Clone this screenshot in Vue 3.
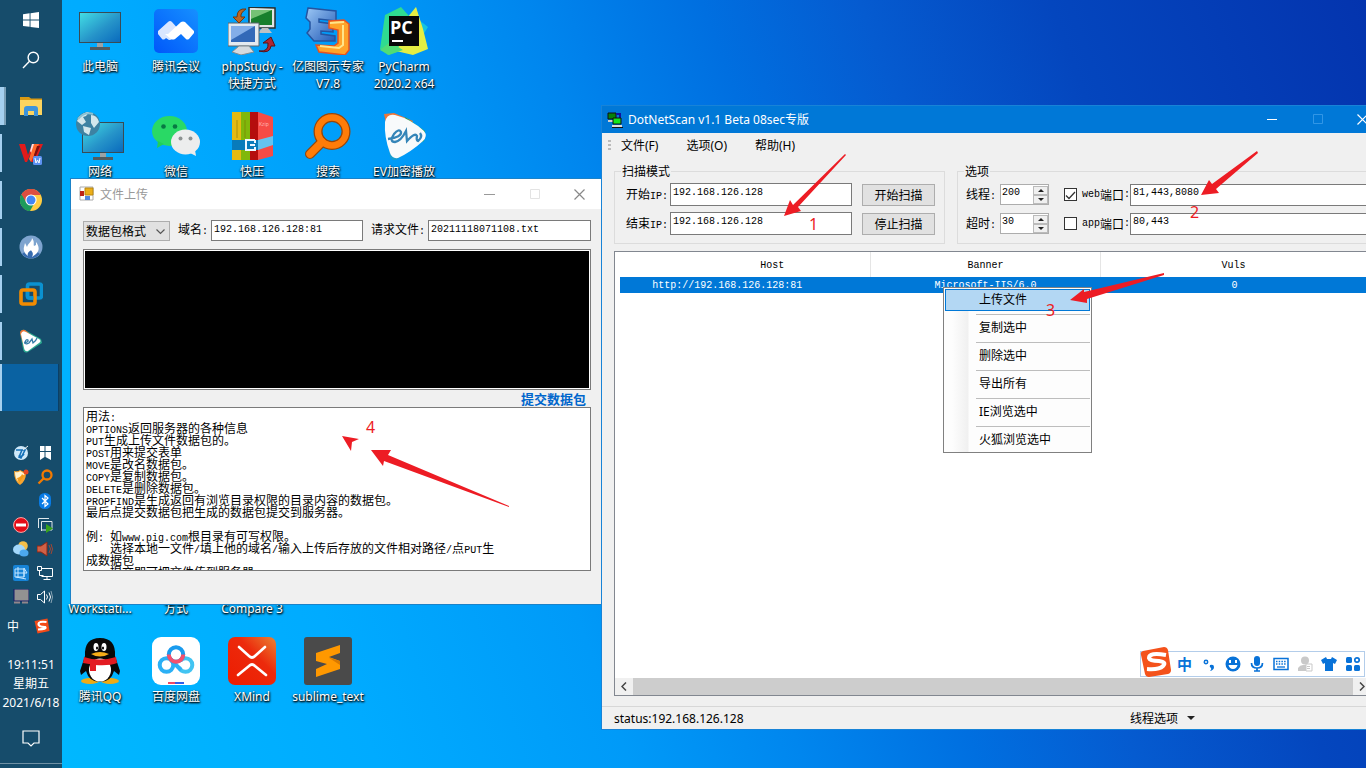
<script setup>
import { ref } from 'vue'

const shortcuts = [
  { icon: 'pc', col: 1, row: 1, lines: ['此电脑'] },
  { icon: 'meeting', col: 2, row: 1, lines: ['腾讯会议'] },
  { icon: 'php', col: 3, row: 1, lines: ['phpStudy -', '快捷方式'] },
  { icon: 'edraw', col: 4, row: 1, lines: ['亿图图示专家', 'V7.8'] },
  { icon: 'pycharm', col: 5, row: 1, lines: ['PyCharm', '2020.2 x64'] },
  { icon: 'network', col: 1, row: 2, lines: ['网络'] },
  { icon: 'wechat', col: 2, row: 2, lines: ['微信'] },
  { icon: 'zip', col: 3, row: 2, lines: ['快压'] },
  { icon: 'search', col: 4, row: 2, lines: ['搜索'] },
  { icon: 'ev', col: 5, row: 2, lines: ['EV加密播放'] },
  { icon: '', col: 1, row: 6, lines: ['Workstati...'] },
  { icon: '', col: 2, row: 6, lines: ['方式'] },
  { icon: '', col: 3, row: 6, lines: ['Compare 3'] },
  { icon: 'qq', col: 1, row: 7, lines: ['腾讯QQ'] },
  { icon: 'netdisk', col: 2, row: 7, lines: ['百度网盘'] },
  { icon: 'xmind', col: 3, row: 7, lines: ['XMind'] },
  { icon: 'sublime', col: 4, row: 7, lines: ['sublime_text'] }
]

const tasks = ['folder', 'wps', 'chrome', 'flame', 'vm', 'ev', 'active']
const tray = ['pen', 'flag', 'shield', 'find', '', 'bt', 'stop', 'copy', 'chat', 'horn', 'panel', 'net', 'kbd', 'vol']

const helpText = [
  '用法:',
  'OPTIONS返回服务器的各种信息',
  'PUT生成上传文件数据包的。',
  'POST用来提交表单',
  'MOVE是改名数据包。',
  'COPY是复制数据包。',
  'DELETE是删除数据包。',
  'PROPFIND是生成返回有浏览目录权限的目录内容的数据包。',
  '最后点提交数据包把生成的数据包提交到服务器。',
  '',
  '例: 如www.pig.com根目录有可写权限。',
  '    选择本地一文件/填上他的域名/输入上传后存放的文件相对路径/点PUT生',
  '成数据包',
  '    提交即可把文件传到服务器'
].map(line => (line.match(/[\x20-\x7e]+|[^\x20-\x7e]+/g) || []).map(t => ({ t, latin: /^[\x20-\x7e]/.test(t) })))

const menuItems = ['上传文件', '复制选中', '删除选中', '导出所有', 'IE浏览选中', '火狐浏览选中']

const domain = ref('192.168.126.128:81')
const requestFile = ref('20211118071108.txt')
const packet = ref('')
const startIp = ref('192.168.126.128')
const endIp = ref('192.168.126.128')
const threads = ref(200)
const timeout = ref(30)
const useWeb = ref(true)
const useApp = ref(false)
const webPorts = ref('81,443,8080')
const appPorts = ref('80,443')
</script>

<template>
  <div class="screen">
    <nav class="taskbar">
      <button class="sys" aria-label="开始">
        <svg width="16" height="16" viewBox="0 0 16 16" fill="#fff"><path d="M0 2.2 6.6 1.3V7.6H0zM7.5 1.2 16 0V7.6H7.5zM0 8.5H6.6V14.8L0 13.9zM7.5 8.5H16V16L7.5 14.9z" /></svg>
      </button>
      <button class="sys" aria-label="搜索">
        <svg width="18" height="18" viewBox="0 0 18 18" fill="none" stroke="#fff" stroke-width="1.4"><circle cx="11.3" cy="6.5" r="5.2" /><path d="M7.5 10.3 1 17" /></svg>
      </button>
      <div class="tasks">
        <button v-for="(t, i) in tasks" :key="t" class="task" :class="{ active: t === 'active', stacked: i === 0 }" :aria-label="t">
          <svg v-if="t !== 'active'" width="24" height="24" viewBox="0 0 24 24">
            <g v-if="t === 'folder'"><path d="M1 3h9l2 1.5h11V20H1z" fill="#d99a14" /><path d="M1 6h22v15H1z" fill="#fbd45f" /><path d="M5 20v-5q0-3 3-3h8q3 0 3 3v7h-4v-5H9v5H5z" fill="#3c94dc" /></g>
            <g v-else-if="t === 'wps'"><path d="M0 3h6l3 11 4-11h11l-8 18h-4l-1-7-3 7H6z" fill="#e11b1b" /><path d="M13 3h4l-4 10-2-3z" fill="#fff" opacity=".85" /><path d="m15 3 5 0-8 18-2-3z" fill="#ff6a2a" /><path d="M18 5h3l-5 12-1-3z" fill="#7d1010" /><rect x="14" y="15" width="9" height="9" rx="1.5" fill="#5d92f2" /><path d="m16 17 1 5 1.5-3 1.5 3 1-5" stroke="#fff" fill="none" /></g>
            <g v-else-if="t === 'chrome'"><circle cx="12" cy="12" r="11" fill="#ffcd42" /><path d="M12 12 2.5 6.5A11 11 0 0 1 21.5 6.5H12z" fill="#dc4e40" /><path d="M2.5 6.5A11 11 0 0 0 11 23l5-9-4-2z" fill="#1d9b5c" /><path d="M2.5 6.5 7.3 15 12 12V7h9.5A11 11 0 0 0 2.5 6.5z" fill="#dc4e40" /><path d="M2.5 6.5 7.3 15 11 17v6A11 11 0 0 1 2.5 6.5z" fill="#1d9b5c" /><circle cx="12" cy="12" r="5.6" fill="#fff" /><circle cx="12" cy="12" r="4.5" fill="#4286f4" /></g>
            <g v-else-if="t === 'flame'"><circle cx="12" cy="12" r="11.5" fill="#7ea4cf" /><path d="M3 19a11.5 11.5 0 0 0 18 0 14 14 0 0 0-18 0" fill="#376caf" /><path d="M9 21c-3-2-5-5-4-9l1-4 2 4c1-4 5-5 5-9 3 4 1 6 2 8l2-1V7c3 4 4 8 0 12l-4 3c2-4 0-5-1-7-3 2-4 4-3 6" fill="#fff" /></g>
            <g v-else-if="t === 'vm'" fill="none" stroke-width="3.6"><rect x="8.5" y="2" width="14" height="14" rx="2" stroke="#0b91d0" /><rect x="2" y="8" width="14" height="14" rx="2" stroke="#f38b00" /><path d="M8.5 10v4q0 2 2 2h4" stroke="#0b91d0" /></g>
            <g v-else><path d="M1 4Q2 0 6 1L22 10l1 4-14 9Q5 25 4 20z" fill="#2caa91" /><path d="M1 4Q2 0 6 1l6 5-7 12z" fill="#ef7131" /><path d="M2 5q1-4 5-2l13 7q3 2 0 4L9 22q-3 1-4-3z" fill="#fff" /><path d="M5 14q5-1 4-3-2-1-3 2 0 3 4 1l3-4 1 4q3-2 4-5" stroke="#347ca8" stroke-width="1.3" fill="none" /></g>
          </svg>
        </button>
      </div>
      <div class="tray">
        <span v-for="(t, i) in tray" :key="i" class="tray-cell">
          <svg v-if="t" width="16" height="16" viewBox="0 0 16 16">
            <g v-if="t === 'pen'"><circle cx="8" cy="8" r="7" fill="#cfe9fa" /><path d="M3 5h9L8 13l-2-1 3-7M6 10q2 3 5-1" stroke="#1470b8" stroke-width="1.6" fill="none" /><path d="m10 5 5-4" stroke="#eee" /></g>
            <g v-else-if="t === 'flag'" fill="#fff"><path d="M3 1h4.5v5H3zM8.5 1H14v5H8.5zM3 7h4.5v5L3 15zM8.5 7H14v8l-5.5-3z" /></g>
            <g v-else-if="t === 'shield'"><path d="M1 2q4 1 6-1l6 3q0 8-6 12Q1 12 1 2" fill="#f8a530" /><path d="M2 3q4 1 5-1l5 3q-4 2-6 8-4-3-4-10" fill="#fff3d1" /><path d="M4 9q4-1 5-4l2 2-5 7z" fill="#f39a18" /><circle cx="13" cy="3" r="2.5" fill="#e54824" /></g>
            <g v-else-if="t === 'find'" fill="none" stroke="#f47a00" stroke-width="2.3"><circle cx="10" cy="6" r="4.5" /><path d="m6.5 9.5-5 5" /></g>
            <g v-else-if="t === 'bt'"><rect x="2" y="0" width="12" height="16" rx="5.5" fill="#087be5" /><path d="m5 5 6 6-3 2.5v-11L11 5l-6 6" fill="none" stroke="#fff" stroke-width="1.2" /></g>
            <g v-else-if="t === 'stop'"><circle cx="8" cy="8" r="7.4" fill="#e40b17" stroke="#faa" /><path d="M3 6.5h10v3H3z" fill="#fff" /></g>
            <g v-else-if="t === 'copy'"><path d="M1.500 11V1.500H12M4.500 14V4.500H15V13H4.500" fill="none" stroke="#e0e8eb" /><path d="m9 7 7 4.500-7 4.500z" fill="#36a21b" /></g>
            <g v-else-if="t === 'chat'"><circle cx="10" cy="5" r="4.8" fill="#f4bf48" /><ellipse cx="6" cy="8.500" rx="6" ry="5" fill="#a3d8fb" /><ellipse cx="11" cy="12" rx="4.500" ry="3.500" fill="#4ca8ef" /></g>
            <g v-else-if="t === 'horn'"><path d="M0 5h4l6-4v14l-6-4H0z" fill="#d16146" stroke="#8c2716" /><path d="M12 4q3 4 0 8M14 3q3 5 0 10" fill="none" stroke="#a44734" /></g>
            <g v-else-if="t === 'panel'"><rect width="16" height="16" rx="2" fill="#1683d6" /><path d="M2 4h9v8H2zM5 2v11M2 8h12l-3-5v9M3 12l10 2" stroke="#c4e6ff" fill="none" /></g>
            <g v-else-if="t === 'net'" fill="none" stroke="#fff"><path d="M4.500 3.500h11v8h-11M10 11.500v3M6.500 14.500h7M.5 1.500h4v4h-4zM2.500 5.500v5h4" /></g>
            <g v-else-if="t === 'kbd'"><path d="M1 0h15v12H1z" fill="#929292" stroke="#181866" /><path d="M1 13.500h6M9 13.500h6" stroke="#92868c" stroke-width="2" /></g>
            <g v-else fill="none" stroke="#fff"><path d="M.5 5.500h3l4-3.500v12l-4-3.500h-3z" /><path d="M9.500 5.500q2 2.500 0 5M12 3.500q3 4.500 0 9" /><path d="M14 2q3 6 0 12" opacity=".5" /></g>
          </svg>
        </span>
      </div>
      <div class="ime">
        <span>中</span>
        <svg width="16" height="16" viewBox="0 0 32 32"><path d="m1 6 26-5 4 25-24 5z" fill="#f34a18" /><path d="M25 8Q9 6 9 12t13 6q5 4-14 5" fill="none" stroke="#fff" stroke-width="4.500" /></svg>
      </div>
      <div class="clock"><time>19:11:51</time><span>星期五</span><span>2021/6/18</span></div>
      <button class="notice" aria-label="通知">
        <svg width="18" height="17" viewBox="0 0 18 17" fill="none" stroke="#fff" stroke-width="1.2"><path d="M1 1h16v12h-5l-3 3-3-3H1z" /></svg>
      </button>
    </nav>

    <main class="desktop">
      <div class="icons">
        <div v-for="s in shortcuts" :key="s.lines[0]" class="shortcut" :class="{ tail: !s.icon }" :style="{ gridColumn: s.col, gridRow: s.row }">
          <svg v-if="s.icon" width="48" height="48" viewBox="0 0 48 48">
            <defs>
              <linearGradient id="scr" x1="0" y1="0" x2="1" y2="1"><stop stop-color="#43dfe5" /><stop offset=".55" stop-color="#2694c9" /><stop offset="1" stop-color="#0869bd" /></linearGradient>
              <linearGradient id="meet" x1="1" y1="0" x2="0" y2="1"><stop stop-color="#1690ff" /><stop offset="1" stop-color="#0057fa" /></linearGradient>
              <linearGradient id="blueE" x1="0" y1="0" x2="1" y2="1"><stop stop-color="#9dc8f5" /><stop offset="1" stop-color="#2059b6" /></linearGradient>
              <linearGradient id="red" x1="1" y1="0" x2="0" y2="1"><stop stop-color="#e98332" /><stop offset=".4" stop-color="#ec2a0c" /><stop offset="1" stop-color="#ed1c00" /></linearGradient>
            </defs>
            <g v-if="s.icon === 'pc'"><rect x="3.500" y="5.500" width="41" height="30" fill="url(#scr)" stroke="#394b55" /><path d="M21 36h6v5h-6z" fill="#9ba3a7" /><path d="M14 40h20v3H14z" fill="#515b60" /></g>
            <g v-else-if="s.icon === 'meeting'"><rect x="2" y="2" width="44" height="44" rx="5" fill="url(#meet)" /><path d="m6 27 0-3 10-9q2-2 4 0l8 9-8 8q-1 1-3 1l-3-2-1 1q-2 1-3 0z" fill="#d9e6ff" /><path d="m16 27 13-12q2-1 4 0l9 9v2l-5 6q-2 1-3 0l-5-5-6 5q-2 1-4 0l-6-5z" fill="#fff" /></g>
            <g v-else-if="s.icon === 'php'"><path d="m21 0 26 1v20H21z" fill="#e0e5e4" stroke="#252f31" stroke-width="1.500" /><path d="m23 3 21 0v15H23z" fill="#177f2c" /><path d="m23 3 21 0-21 9z" fill="#75c275" /><path d="M34 21h6l4 5H30z" fill="#bdc2c4" /><path d="M0 16h31v23H0z" fill="#e3eaf0" stroke="#59646c" /><path d="M3 19h24v16H3z" fill="#3269b8" /><path d="M3 19h24L3 33z" fill="#83aee8" /><path d="M11 39h10l5 6-13 3-9-3z" fill="#d5dade" stroke="#818b91" /><path d="M18 2q-9-1-9 8H5l6 6 6-6h-4q-1-4 5-8" fill="#bd6724" stroke="#73370d" /><path d="M31 44q10 1 9-8h-5l8-6 4 9h-4q-1 8-12 5" fill="#ae2735" stroke="#551117" /></g>
            <g v-else-if="s.icon === 'edraw'"><path d="m4 1 28 3v10l-17-2v3l14 2v8l-12-1v3l14 2v5H10l-7-8 3-4V15l-4-4z" fill="url(#blueE)" stroke="#2554a0" stroke-width="1.500" /><path d="m25 14 15-1 5 4v26l-4 5-26-3-3-7 18 1 4-3V23l-9-2z" fill="#ffa329" stroke="#e65220" stroke-width="1.500" /><path d="m26 16 14-1M16 39l19 2 4-3V18" stroke="#ffe58a" stroke-width="2" fill="none" /></g>
            <g v-else-if="s.icon === 'pycharm'"><path d="M5 8 21 0l8 9-4 33-17 6L0 42z" fill="#2fdb91" /><path d="m29 8 7-8 3 13 9 7-8 13z" fill="#14c4df" /><path d="M28 10 36 0l7 22 5 20-15 6-17-4 12-20z" fill="#e5ee43" /><path d="m0 43 10-8 13 8-14 5z" fill="#50dc76" /><rect x="9" y="9" width="30" height="30" fill="#080808" /><text x="10" y="27" class="pc-text">PC</text><path d="M12 33h11v2H12z" fill="#fff" /></g>
            <g v-else-if="s.icon === 'network'"><rect x="6.500" y="10.500" width="41" height="30" fill="url(#scr)" stroke="#394b55" /><path d="M24 41h6v4h-6z" fill="#9ba3a7" /><path d="M17 45h20v3H17z" fill="#515b60" /><circle cx="12" cy="12" r="12" fill="#3d82a2" /><path d="M3 5q5-5 10-5l-3 4-3 1 3 5-4 3-5-4zM15 3q6 0 8 7l-5 6-3-5zM7 14l8 2-2 7-5-3z" fill="#d3e7ec" /><path d="M2 7q7-8 15-5" fill="none" stroke="#8ac3d5" stroke-width="2" /></g>
            <g v-else-if="s.icon === 'wechat'"><ellipse cx="17.500" cy="19" rx="17.500" ry="15" fill="#29d965" /><path d="m6 29-1 7 7-4z" fill="#20cf5c" /><circle cx="11.500" cy="14.500" r="2.300" fill="#087943" /><circle cx="23" cy="14.500" r="2.300" fill="#087943" /><ellipse cx="33.500" cy="30" rx="14.500" ry="12.500" fill="#eceded" /><path d="m38 41 6 3-1-6z" fill="#ececec" /><circle cx="28.500" cy="26.500" r="2" fill="#8d9292" /><circle cx="38.500" cy="26.500" r="2" fill="#8d9292" /></g>
            <g v-else-if="s.icon === 'zip'"><path d="M4 0h9v48H4z" fill="#e5ba12" /><path d="M13 0h9v48h-9z" fill="#80b80b" /><path d="M22 0h8v48h-8z" fill="#b50d0d" /><path d="m30 0 15 5v39l-15 4z" fill="#f64b46" /><path d="M9 8v18M17 8v18" stroke="#776b05" opacity=".5" /><path d="M4 28h26v10H4z" fill="#087bbb" /><path d="m30 28 15-4v9l-15 5z" fill="#65c3f0" /><path d="M27 28h-9v10h9v-3M27 28v3M22 33h5" fill="none" stroke="#eef7ff" stroke-width="2" /><text x="31" y="14" class="zip-text">Kzip</text></g>
            <g v-else-if="s.icon === 'search'" fill="none" stroke-linecap="round"><circle cx="28" cy="19.500" r="14" stroke="#96460a" stroke-width="9" /><path d="M18 30 6 42" stroke="#96460a" stroke-width="10" /><circle cx="28" cy="19.500" r="14" stroke="#ff7c08" stroke-width="6.500" /><path d="M18 30 6 42" stroke="#ff7c08" stroke-width="7.500" /></g>
            <g v-else-if="s.icon === 'ev'"><path d="M4 2 14 1l19 8-20 32z" fill="#ef7638" /><path d="m25 5 20 14-1 10-13 6z" fill="#15a05d" /><path d="m9 38 23-1-14 10q-6 3-8-2z" fill="#179dd0" /><path d="M5 10Q7 1 15 3q16 4 29 16 4 5-1 10-12 11-25 17-6 1-8-5Q4 25 5 10" fill="#f8fafb" /><path d="M8 27q14-2 13-7-2-4-7 2-5 8 1 8 6-1 11-11l1 10q8-9 10-5-1 4 1 5 5-4 2-8" fill="none" stroke="#3585b8" stroke-width="2.300" /></g>
            <g v-else-if="s.icon === 'qq'"><ellipse cx="14" cy="44" rx="9" ry="3" fill="#efab16" /><ellipse cx="34" cy="44" rx="9" ry="3" fill="#efab16" /><path d="M9 19Q8 1 24 1t15 18l5 15-1 4-5-4q-3 11-14 11T10 34l-5 4-1-4z" fill="#090909" /><ellipse cx="24" cy="33" rx="11" ry="11.500" fill="#fff" /><path d="M8 20q15 5 32 0l1 6q-7 3-22 2l-12-2z" fill="#e31b22" /><path d="M14 26h6v8h-6z" fill="#e31b22" /><ellipse cx="20" cy="10" rx="2.500" ry="4" fill="#fff" /><ellipse cx="28" cy="10" rx="2.500" ry="4" fill="#fff" /><ellipse cx="21" cy="11" rx="1" ry="1.500" /><ellipse cx="27" cy="11" rx="1" ry="1.500" /><path d="M15 17q9-4 18 0-9 5-18 0" fill="#f6ad17" /></g>
            <g v-else-if="s.icon === 'netdisk'"><rect width="48" height="48" rx="9" fill="#fff" /><g fill="none" stroke-width="4"><circle cx="14.500" cy="28" r="6.800" stroke="#2bb0f5" /><circle cx="33.500" cy="28" r="6.800" stroke="#42c4f2" stroke-dasharray="36 7" stroke-dashoffset="-26" /><path d="m19 23 10 10" stroke="#2bb0f5" /><circle cx="24" cy="17.500" r="7.200" stroke="#199bee" /><path d="M16.800 17.500a7.200 7.200 0 0 0 14.400 0" stroke="#f4506d" /></g><path d="M16 45h7v2h-7z" fill="#ed4966" /><path d="M23 45h9v2h-9z" fill="#315fe9" /></g>
            <g v-else-if="s.icon === 'xmind'"><rect width="48" height="48" rx="7" fill="url(#red)" /><path d="m11 10 10 9q3 3 6 0l10-9M10 38l11-9q3-3 6 0l11 9" fill="none" stroke="#fff" stroke-width="2.600" stroke-linecap="round" /></g>
            <g v-else><rect width="48" height="48" rx="3" fill="#4a4a4a" /><path d="m12 16 24-8v8l-11 4 11 4v8l-24 8v-8l11-5-11-3z" fill="#ff9800" /><path d="m24.500 20.500 11.500 3.500v4z" fill="#d97900" /></g>
          </svg>
          <span v-for="l in s.lines" :key="l">{{ l }}</span>
        </div>
      </div>

      <section class="window upload">
        <header class="titlebar">
          <svg width="16" height="16" viewBox="0 0 16 16"><path d="M1 1h13v13H1z" fill="#fff" stroke="#aaa" /><path d="M6 2h8v7H6z" fill="#ecae18" stroke="#b68612" /><path d="M1 5h4v5H1z" fill="#bd2418" /><path d="M6 10h5v4H6z" fill="#5189df" /></svg>
          <h2>文件上传</h2>
          <button aria-label="最小化"><svg width="11" height="11"><path d="M0 5.500h11" stroke="#999" /></svg></button>
          <button aria-label="最大化" disabled><svg width="11" height="11"><path d="M.5.5h9v9h-9z" fill="none" stroke="#e3e3e3" /></svg></button>
          <button aria-label="关闭"><svg width="11" height="11"><path d="m.5.5 10 10m0-10-10 10" stroke="#888" stroke-width="1.200" /></svg></button>
        </header>
        <div class="upload-body">
          <div class="upload-row">
            <div class="combo">
              <select aria-label="数据包格式"><option>数据包格式</option></select>
              <svg width="9" height="6" viewBox="0 0 9 6"><path d="m.5.5 4 4 4-4" fill="none" stroke="#555" stroke-width="1.200" /></svg>
            </div>
            <label for="domain">域名<b class="lat">:</b></label>
            <input id="domain" v-model="domain" class="box domain">
            <label for="reqfile">请求文件<b class="lat">:</b></label>
            <input id="reqfile" v-model="requestFile" class="box grow">
          </div>
          <textarea v-model="packet" class="packet" aria-label="数据包"></textarea>
          <a href="#" class="submit">提交数据包</a>
          <div class="help" tabindex="0" aria-label="用法">
            <p v-for="(line, i) in helpText" :key="i"><span v-for="(p, j) in line" :key="j" :class="{ lat: p.latin }">{{ p.t }}</span></p>
          </div>
        </div>
      </section>

      <section class="window scan">
        <header class="titlebar">
          <svg width="16" height="16" viewBox="0 0 16 16"><path d="M1 1h8v6H1z" fill="#06820b" stroke="#111" /><path d="M1 9h6" stroke="#ccc" stroke-width="2" /><path d="M9 2h4v4" fill="none" stroke="#1111a0" stroke-width="2" /><path d="M6 6h8v6H6z" fill="#12e51b" stroke="#111" /><path d="M5 14h10" stroke="#ddd" stroke-width="2" /><path d="M5 15.500h11" stroke="#111" /></svg>
          <h2>DotNetScan v1.1 Beta 08sec专版</h2>
          <button aria-label="最小化"><svg width="11" height="11"><path d="M0 5.500h10" stroke="#fff" /></svg></button>
          <button aria-label="最大化" disabled><svg width="11" height="11"><path d="M.5.5h9v9h-9z" fill="none" stroke="#3196e6" /></svg></button>
          <button aria-label="关闭"><svg width="11" height="11"><path d="m.5.5 10 10m0-10-10 10" stroke="#fff" stroke-width="1.200" /></svg></button>
        </header>
        <nav class="menubar">
          <i class="grip"></i>
          <button>文件(F)</button><button>选项(O)</button><button>帮助(H)</button>
        </nav>
        <div class="groups">
          <fieldset class="mode">
            <legend>扫描模式</legend>
            <div class="line">
              <label for="ip1">开始<b class="lat">IP:</b></label>
              <input id="ip1" v-model="startIp" class="box ip">
              <button class="push">开始扫描</button>
            </div>
            <div class="line">
              <label for="ip2">结束<b class="lat">IP:</b></label>
              <input id="ip2" v-model="endIp" class="box ip">
              <button class="push">停止扫描</button>
            </div>
          </fieldset>
          <fieldset class="opts">
            <legend>选项</legend>
            <div class="line">
              <label for="threads">线程<b class="lat">:</b></label>
              <span class="spin">
                <input id="threads" v-model="threads" type="number">
                <span class="arrows"><button aria-label="增加" @click="threads++"><i class="up"></i></button><button aria-label="减少" @click="threads--"><i class="down"></i></button></span>
              </span>
              <label class="check"><input v-model="useWeb" type="checkbox"><svg v-if="useWeb" width="11" height="11" viewBox="0 0 11 11"><path d="m1 5.500 3 3 6-6.500" fill="none" stroke="#333" stroke-width="1.300" /></svg><b class="lat">web</b>端口<b class="lat">:</b></label>
              <input v-model="webPorts" class="box grow" aria-label="web端口">
            </div>
            <div class="line">
              <label for="timeout">超时<b class="lat">:</b></label>
              <span class="spin">
                <input id="timeout" v-model="timeout" type="number">
                <span class="arrows"><button aria-label="增加" @click="timeout++"><i class="up"></i></button><button aria-label="减少" @click="timeout--"><i class="down"></i></button></span>
              </span>
              <label class="check"><input v-model="useApp" type="checkbox"><b class="lat">app</b>端口<b class="lat">:</b></label>
              <input v-model="appPorts" class="box grow" aria-label="app端口">
            </div>
          </fieldset>
        </div>
        <div class="list">
          <table>
            <thead><tr><th class="host">Host</th><th class="banner">Banner</th><th>Vuls</th></tr></thead>
            <tbody><tr><td class="url">http://192.168.126.128:81</td><td>Microsoft-IIS/6.0</td><td>0</td></tr></tbody>
          </table>
          <div class="hscroll">
            <button aria-label="向左"><svg width="6" height="9"><path d="m5 .5-4 4 4 4" fill="none" stroke="#444" stroke-width="1.500" /></svg></button>
            <i class="thumb"></i>
            <button aria-label="向右"><svg width="6" height="9"><path d="m1 .5 4 4-4 4" fill="none" stroke="#444" stroke-width="1.500" /></svg></button>
          </div>
        </div>
        <footer class="status"><span>status:192.168.126.128</span><button>线程选项 <i class="down"></i></button></footer>
      </section>

      <ul class="context">
        <li v-for="(m, i) in menuItems" :key="m"><button :class="{ hot: i === 0 }">{{ m }}</button></li>
      </ul>

      <div class="sogou">
        <svg class="logo" width="32" height="32" viewBox="0 0 32 32"><path d="M3 5 24 1q3 0 4 3l3 20q0 3-3 4L9 31q-3 0-4-3L1 9q-1-3 2-4" fill="#f4521b" /><path d="M26 9Q9 6 9 12q1 3 10 3 8 1 4 5-4 4-16 3" fill="none" stroke="#fff" stroke-width="4" /></svg>
        <span class="zh">中</span>
        <svg width="16" height="16" viewBox="0 0 16 16"><circle cx="5" cy="6" r="1.700" fill="none" stroke="#0872d8" stroke-width="1.500" /><path d="M9 9q4-1 4 2 0 3-4 4 2-2 1-3-2-1-1-3" fill="#0872d8" /></svg>
        <svg width="16" height="16" viewBox="0 0 16 16"><circle cx="8" cy="8" r="7.500" fill="#0872d8" /><path d="M4 4h2v3H4zM10 4h2v3h-2zM3.500 9h9q-1 4-4.500 4T3.500 9" fill="#fff" /></svg>
        <svg width="16" height="16" viewBox="0 0 16 16"><rect x="5" y="0" width="6" height="10" rx="3" fill="#0872d8" /><path d="M2.500 7q0 5 5.500 5t5.500-5M8 12v3M5 15h6" fill="none" stroke="#0872d8" stroke-width="1.700" /></svg>
        <svg width="16" height="16" viewBox="0 0 16 16"><path d="M1 2.500h14v11H1z" fill="none" stroke="#0872d8" stroke-width="1.500" /><path d="M3 5.500h10M3 8h10" stroke="#0872d8" stroke-width="1.500" stroke-dasharray="1.500 1.200" /><path d="M4 11h8" stroke="#0872d8" stroke-width="1.300" /></svg>
        <svg width="16" height="16" viewBox="0 0 16 16"><circle cx="8" cy="4.500" r="4" fill="#c9c9c9" /><path d="M1 15v-3q2-3 5-3h4v6z" fill="#c9c9c9" /><path d="M9 8h6v7H9z" fill="#fff" stroke="#c9c9c9" /><path d="M10 10.500h3M10 12.500h3" stroke="#c9c9c9" /></svg>
        <svg width="16" height="16" viewBox="0 0 16 16"><path d="m5 1 1 2h4l1-2 5 3-2 4-2-1v8H4V7L2 8 0 4z" fill="#0872d8" /></svg>
        <svg width="16" height="16" viewBox="0 0 16 16" fill="#0872d8"><rect x="1" y="1" width="6" height="6" rx="1.500" /><rect x="1" y="9" width="6" height="6" rx="1.500" /><rect x="9" y="9" width="6" height="6" rx="1.500" /><circle cx="12" cy="4" r="2.200" fill="none" stroke="#0872d8" stroke-width="1.700" /></svg>
      </div>
    </main>

    <svg class="marks" width="1366" height="768" viewBox="0 0 1366 768" fill="#ed1c24" aria-hidden="true">
      <path d="m784 216 6-16 3 5 52-51 1 1-48 52 3 4z" />
      <path d="m1201 195 8-15 3 4 45-33 1 2-42 36 3 4z" />
      <path d="m1070 300 14-11v3l80-19v2l-77 24v4z" />
      <path d="m371 450 20 0-3 5 121 51v1l-125-46-1 5z" />
      <path d="m342 436 17 3-7 3-1 9z" />
      <text x="809" y="230">1</text>
      <text x="1190" y="218">2</text>
      <text x="1046" y="316">3</text>
      <text x="366" y="433">4</text>
    </svg>
  </div>
</template>

<style>
html, body { overflow: hidden; }
</style>

<style scoped>
.screen, .screen * { box-sizing: border-box; }
.screen { position: relative; display: flex; min-height: 100vh; font: 12px/17px "Noto Sans", "Noto Sans CJK SC", sans-serif; color: #000; overflow: hidden; }
button { padding: 0; border: 0; background: none; font: inherit; color: inherit; }
input, select, textarea { font: inherit; margin: 0; border-radius: 0; outline: 0; }
.lat { font: 10px/12px "Liberation Mono", monospace; }
svg { flex: none; display: block; }

.taskbar { width: 62px; flex: none; display: flex; flex-direction: column; background: #164c6b; color: #fff; }
.sys { height: 40px; display: grid; place-items: center; }
.tasks { margin-top: 2px; }
.task { position: relative; display: grid; place-items: center; width: 62px; height: 47px; }
.task::before { content: ""; position: absolute; left: 0; top: 5px; width: 2px; height: 38px; background: #a5d0f0; }
.task.stacked::before { width: 4px; border-right: 2px solid #7ba0b8; }
.task.active { width: 59px; background: #0a62a2; border-right: 1px solid #0b3f65; }
.task.active::before { top: 0; height: 47px; }
.tray { margin: 30px 0 0 9px; display: grid; grid-template-columns: 24px 24px; grid-auto-rows: 24px; }
.tray-cell { display: grid; place-items: center; }
.ime { display: flex; align-items: center; justify-content: space-between; height: 34px; padding: 0 12px 0 7px; }
.clock { margin-top: 12px; display: flex; flex-direction: column; align-items: center; line-height: 19px; white-space: nowrap; }
.notice { margin-top: 9px; height: 34px; display: grid; place-items: center; border: 0; }
.taskbar::after { content: ""; margin-top: 8px; border-top: 1px solid #6f91a5; }

.desktop { position: relative; flex: 1; overflow: hidden; background: linear-gradient(70deg, #00b8ff 0%, #00abff 20%, #009af8 36%, #0086ee 47%, #006fe0 58%, #055bd0 68%, #0446be 80%, #0434ae 100%); }
.icons { display: grid; grid-template-columns: repeat(5, 76px); grid-auto-rows: 105px; padding-top: 7px; }
.shortcut { display: flex; flex-direction: column; align-items: center; color: #fff; white-space: nowrap; text-shadow: 0 1px 2px #000, 1px 1px 2px #000; }
.shortcut svg { margin-bottom: 3px; }
.tail { padding-top: 68px; }
.pc-text { font: bold 18px "Open Sans", sans-serif; fill: #fff; text-shadow: none; }
.zip-text { font: 5px "Open Sans", sans-serif; fill: #fbb; text-shadow: none; }

.window { position: absolute; display: flex; flex-direction: column; background: #f0f0f0; border: 1px solid #1b82c8; }
.titlebar { flex: none; display: flex; align-items: center; }
.titlebar h2 { flex: 1; margin: 0; font-weight: 400; font-size: 12px; }
.titlebar button { width: 46px; height: 27px; display: grid; place-items: center; }
.titlebar button:last-child { width: 43px; }
.upload { left: 8px; top: 178px; width: 532px; height: 427px; }
.upload .titlebar { height: 30px; padding-left: 8px; gap: 0; background: #fff; color: #999; }
.upload h2, .scan h2 { padding-left: 5px; }
.upload-body { flex: 1; min-height: 0; display: flex; flex-direction: column; padding: 11px 10px 33px 12px; font: 12px/12px "Noto Sans CJK SC", sans-serif; }
.upload-row { flex: none; display: flex; align-items: center; height: 21px; }
.upload-row label { margin-left: 8px; white-space: nowrap; }
.upload-row .box { height: 21px; }
.domain { width: 152px; margin-left: 3px; }
.upload-row .grow { margin-left: 3px; }
.grow { flex: 1; min-width: 0; }
.combo { position: relative; width: 87px; height: 20px; }
.combo select { width: 100%; height: 100%; appearance: none; border: 1px solid #adadad; background: #e1e1e1; padding: 0 2px; color: #000; }
.combo svg { position: absolute; right: 5px; top: 8px; pointer-events: none; }
.box { border: 1px solid #7a7a7a; background: #fff; padding: 0 2px 2px; font: 10px/12px "Liberation Mono", monospace; color: #000; }
.packet { flex: none; display: block; width: 100%; height: 141px; margin-top: 8px; border: 1px solid #7a7a7a; outline: 1px solid #fff; outline-offset: -2px; background: #000; color: #fff; resize: none; }
.submit { align-self: flex-end; margin: 2px 5px 2px 0; font: bold 13px/13px "Noto Sans CJK SC", sans-serif; color: #06c; text-decoration: none; }
.help { flex: 1; min-height: 0; border: 1px solid #7a7a7a; background: #fff; padding: 2px 2px 0; overflow: hidden; }
.help p { margin: 0; height: 12px; white-space: pre; line-height: 12px; }
.help span { line-height: 12px; }

.scan { left: 539px; top: 105px; right: -19px; height: 625px; border-color: #1883d7; }
.scan .titlebar { height: 27px; padding-left: 5px; background: #0078d7; color: #fff; }
.menubar { display: flex; align-items: center; height: 25px; padding-left: 6px; gap: 28px; }
.grip { width: 3px; height: 11px; margin-right: -18px; background: repeating-linear-gradient(#bbb 0 2px, transparent 2px 4px); }
.groups { display: flex; gap: 12px; padding: 6px 12px 0; font: 12px/14px "Noto Sans CJK SC", sans-serif; }
fieldset { margin: 0; border: 1px solid #dcdcdc; padding: 2px 9px 8px 11px; min-width: 0; height: 80px; }
legend { padding: 0 1px; margin-left: -5px; height: 14px; }
.mode { width: 331px; flex: none; }
.opts { flex: 1; padding: 2px 0 8px 8px; }
.opts legend { margin-left: -2px; }
.line { display: flex; align-items: center; height: 29px; white-space: nowrap; }
.line label { flex: none; width: 44px; }
.line .box { height: 23px; padding-bottom: 4px; }
.ip { width: 182px; }
.push { width: 73px; height: 22px; margin-left: 10px; border: 1px solid #adadad; background: #e1e1e1; }
.opts .line label { width: 34px; }
.opts .line .box { height: 22px; }
.spin { display: flex; width: 49px; height: 21px; border: 1px solid #adadad; background: #fff; }
.spin input { width: 32px; border: 0; padding: 0 0 3px 1px; background: none; font: 10px/12px "Liberation Mono", monospace; appearance: textfield; }
.spin input::-webkit-inner-spin-button { appearance: none; }
.arrows { display: flex; flex-direction: column; width: 15px; padding-top: 1px; }
.arrows button { flex: 1; display: grid; place-items: center; border: 1px solid #bbb; background: #f0f0f0; }
.up { border: 3px solid transparent; border-top: 0; border-bottom-color: #222; }
.down { border: 3px solid transparent; border-bottom: 0; border-top-color: #222; }
.opts .line .check { position: relative; display: flex; align-items: center; width: 66px; margin-left: 15px; }
.check input { appearance: none; width: 13px; height: 13px; border: 1px solid #333; background: #fff; margin-right: 5px; }
.check svg { position: absolute; left: 1px; top: 2px; }

.list { flex: 1; display: flex; flex-direction: column; margin: 7px 12px 0 12px; border: 1px solid #828790; background: #fff; }
table { border-collapse: collapse; table-layout: fixed; width: 100%; font: 10px/12px "Liberation Mono", monospace; text-align: center; }
th, td { padding: 0; font-weight: 400; }
th { height: 25px; border-right: 1px solid #e5e5e5; padding-top: 2px; }
th:last-child { border-right: 0; }
.host { width: 253px; }
.banner { width: 230px; }
td { height: 16px; background: #0078d7; color: #fff; padding-top: 1px; }
td.url { border-left: 5px solid #fff; padding-right: 36px; }
th.host { padding-left: 57px; }
.hscroll { margin-top: auto; display: flex; height: 17px; background: #f0f0f0; }
.hscroll button { width: 18px; display: grid; place-items: center; }
.thumb { flex: 1; background: #cdcdcd; }
.status { height: 23px; margin-top: 10px; border-top: 1px solid #d7d7d7; padding-left: 12px; display: flex; align-items: center; }
.status span { width: 516px; }
.status button { display: flex; align-items: center; gap: 9px; }
.status .down { border-width: 4px 4px 0; }

.context { position: absolute; left: 881px; top: 287px; width: 149px; margin: 0; padding: 1px; list-style: none; border: 1px solid #808080; background: linear-gradient(90deg, #fdfdfd 0 8px, #f0f0f0 24px, #fdfdfd 25px); }
.context li + li::before { content: ""; display: block; margin: 3px 0 2px 31px; border-top: 1px solid #bdbdbd; }
.context button { display: block; width: 100%; height: 22px; padding-left: 34px; text-align: left; line-height: 20px; }
.context .hot { border: 1px solid #0078d7; background: #b3d7f3; padding-left: 33px; line-height: 18px; }

.sogou { position: absolute; right: 1px; top: 651px; display: flex; align-items: center; gap: 8px; height: 26px; padding: 0 3px 0 0; border: 1px solid #b3cdea; background: #fff; }
.logo { margin: -4px -3px 0 -1px; }
.zh { width: 16px; font-weight: 700; font-size: 15px; color: #0872d8; }

.marks { position: absolute; left: 0; top: 0; pointer-events: none; font: 16px "Noto Sans", sans-serif; }
</style>
